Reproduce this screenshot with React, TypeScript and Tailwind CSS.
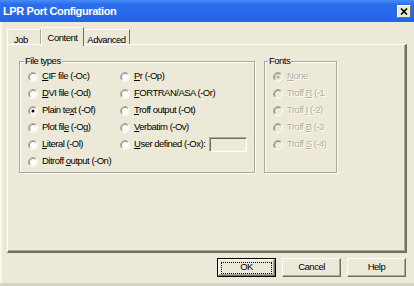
import React from "react";

const FACE = "#ece9d8";

function Radio({ checked = false, disabled = false }: { checked?: boolean; disabled?: boolean }) {
  return (
    <svg width="10" height="10" viewBox="0 0 12 12" className="shrink-0">
      <circle cx="6" cy="6" r="5" fill={disabled ? FACE : "#ffffff"} />
      {/* outer etched ring */}
      <path d="M2.11 9.89 A5.5 5.5 0 0 1 9.89 2.11" fill="none" stroke="#aca899" strokeWidth="1" />
      <path d="M9.89 2.11 A5.5 5.5 0 0 1 2.11 9.89" fill="none" stroke="#ffffff" strokeWidth="1" />
      {/* inner ring */}
      <path d="M2.82 9.18 A4.5 4.5 0 0 1 9.18 2.82" fill="none" stroke="#716f64" strokeWidth="1" />
      <path d="M9.18 2.82 A4.5 4.5 0 0 1 2.82 9.18" fill="none" stroke="#f1efe2" strokeWidth="1" />
      {checked && <circle cx="6" cy="6" r="1.8" fill={disabled ? "#aca899" : "#000000"} />}
    </svg>
  );
}

function Option({
  children,
  checked,
  disabled,
}: {
  children: React.ReactNode;
  checked?: boolean;
  disabled?: boolean;
}) {
  return (
    <div className="flex h-[17px] items-center gap-[4px]">
      <Radio checked={checked} disabled={disabled} />
      <span
        className={
          disabled
            ? "whitespace-nowrap text-[#b4b0a2] [text-shadow:1px_1px_0_#ffffff]"
            : "whitespace-nowrap"
        }
      >
        {children}
      </span>
    </div>
  );
}

function Btn({ children, isDefault }: { children: React.ReactNode; isDefault?: boolean }) {
  const inner = (
    <div className="flex h-full w-full items-center justify-center border border-t-white border-l-white border-r-[#716f64] border-b-[#716f64] shadow-[inset_-1px_-1px_0_#aca899]">
      {isDefault ? (
        <span className="flex h-[12px] w-[51px] items-center justify-center border border-dotted border-black">
          {children}
        </span>
      ) : (
        children
      )}
    </div>
  );
  return isDefault ? (
    <div className="h-[19px] w-[59px] border border-black">{inner}</div>
  ) : (
    <div className="h-[19px] w-[59px]">{inner}</div>
  );
}

export default function App() {
  return (
    <div className="relative flex h-[286px] w-[414px] flex-col overflow-hidden border-b-[3px] border-b-[#d8d4c4] bg-[#ece9d8] font-['Liberation_Sans',Arial,sans-serif] text-[9.5px] tracking-[-0.5px] text-black">
      {/* title bar */}
      <div className="flex h-[22px] shrink-0 items-center justify-between bg-[linear-gradient(to_bottom,#4a8cf7_0%,#2a6eec_20%,#2266e8_100%)] pl-[3px] pr-[3px]">
        <span className="text-[11px] font-bold tracking-[-0.4px] text-white">LPR Port Configuration</span>
        <div className="flex h-[13px] w-[14px] items-center justify-center border border-t-white border-l-white border-r-[#716f64] border-b-[#716f64] bg-[#ece9d8]">
          <svg width="8" height="7" viewBox="0 0 8 7">
            <path d="M1 0.5 L7 6.5 M7 0.5 L1 6.5" stroke="#000" strokeWidth="1.6" />
          </svg>
        </div>
      </div>

      <div className="flex flex-1 flex-col border-l-2 border-l-[#f7f6ef] pl-[5px] pr-[7px]">
        {/* tabs */}
        <div className="mt-[5px] flex h-[17px] items-end">
          <div className="flex h-[15px] w-[34px] items-start border-l border-t border-l-white border-t-white border-r border-r-[#aca899] pl-[6px] pt-[3px]">
            Job
          </div>
          <div className="relative z-10 -mb-[2px] flex h-[19px] w-[43px] items-start justify-center border-l border-t border-l-white border-t-white border-r border-r-[#716f64] bg-[#ece9d8] pt-[3px]">
            Content
          </div>
          <div className="flex h-[15px] w-[46px] items-start justify-center border-t border-t-white border-r border-r-[#716f64] pt-[3px]">
            Advanced
          </div>
        </div>

        {/* tab panel */}
        <div className="flex h-[209px] flex-col border-l border-t border-l-white border-t-white border-r-2 border-b-2 border-r-[#716f64] border-b-[#716f64]">
          <div className="flex h-full gap-[9px] pl-[11px] pt-[10px] shadow-[inset_-1px_-1px_0_#aca899]">
            <fieldset className="h-[118px] w-[236px] min-w-0 border border-[#aca899] shadow-[1px_1px_0_#ffffff,inset_1px_1px_0_#ffffff]">
              <legend className="ml-[4px] bg-[#ece9d8] px-[1px] leading-[12px]">File types</legend>
              <div className="flex pl-[8px] pt-[1px]">
                <div className="w-[92px]">
                  <Option><u>C</u>IF file (-Oc)</Option>
                  <Option><u>D</u>VI file (-Od)</Option>
                  <Option checked>Plain te<u>x</u>t (-Of)</Option>
                  <Option>Plot fil<u>e</u> (-Og)</Option>
                  <Option><u>L</u>iteral (-Ol)</Option>
                  <Option>Ditroff <u>o</u>utput (-On)</Option>
                </div>
                <div>
                  <Option><u>P</u>r (-Op)</Option>
                  <Option><u>F</u>ORTRAN/ASA (-Or)</Option>
                  <Option><u>T</u>roff output (-Ot)</Option>
                  <Option><u>V</u>erbatim (-Ov)</Option>
                  <div className="flex h-[17px] items-center gap-[4px]">
                    <Radio />
                    <span className="whitespace-nowrap"><u>U</u>ser defined (-Ox):</span>
                    <div className="ml-[0px] h-[15px] w-[38px] border border-t-[#aca899] border-l-[#aca899] border-r-white border-b-white shadow-[inset_1px_1px_0_#716f64,inset_-1px_-1px_0_#f1efe2]" />
                  </div>
                </div>
              </div>
            </fieldset>

            <fieldset className="h-[118px] w-[73px] min-w-0 border border-[#aca899] shadow-[1px_1px_0_#ffffff,inset_1px_1px_0_#ffffff]">
              <legend className="ml-[3px] bg-[#ece9d8] px-[1px] leading-[12px]">Fonts</legend>
              <div className="pl-[8px] pt-[1px]">
                <Option checked disabled><u>N</u>one</Option>
                <Option disabled>Troff <u>R</u> (-1</Option>
                <Option disabled>Troff <u>I</u> (-2)</Option>
                <Option disabled>Troff <u>B</u> (-3</Option>
                <Option disabled>Troff <u>S</u> (-4)</Option>
              </div>
            </fieldset>
          </div>
        </div>

        {/* buttons */}
        <div className="mt-[5px] flex justify-end gap-[6px] pr-[1px]">
          <Btn isDefault>OK</Btn>
          <Btn>Cancel</Btn>
          <Btn>Help</Btn>
        </div>
      </div>
    </div>
  );
}
